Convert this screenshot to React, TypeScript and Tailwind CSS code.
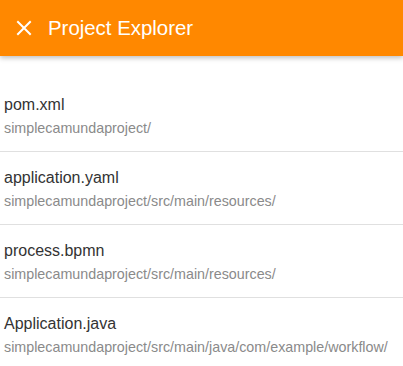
import React from "react";

const items = [
  { name: "pom.xml", path: "simplecamundaproject/" },
  { name: "application.yaml", path: "simplecamundaproject/src/main/resources/" },
  { name: "process.bpmn", path: "simplecamundaproject/src/main/resources/" },
  { name: "Application.java", path: "simplecamundaproject/src/main/java/com/example/workflow/" },
];

export default function App() {
  return (
    <div className="w-[403px] h-[366px] bg-white overflow-hidden" style={{ fontFamily: "'Liberation Sans', Arial, sans-serif" }}>
      <div className="h-[56px] bg-[#ff8800] flex items-center shadow-[0_2px_5px_rgba(0,0,0,0.25)] relative z-10">
        <svg className="ml-[16px]" width="16" height="16" viewBox="0 0 16 16" fill="none" stroke="white" strokeWidth="2" strokeLinecap="square">
          <path d="M2 2 L14 14 M14 2 L2 14" />
        </svg>
        <span className="ml-[16px] text-white text-[20.4px]">Project Explorer</span>
      </div>
      <div className="pt-[23px]">
        {items.map((it, i) => (
          <div key={i} className={`pl-[4px] pt-[16px] pb-[13px] ${i < items.length - 1 ? "border-b border-[#e0e0e0]" : ""}`}>
            <div className="text-[16px] leading-[20px] text-[#333333]">{it.name}</div>
            <div className="mt-[3px] text-[14.3px] leading-[20px] text-[#8a8a8a]">{it.path}</div>
          </div>
        ))}
      </div>
    </div>
  );
}
